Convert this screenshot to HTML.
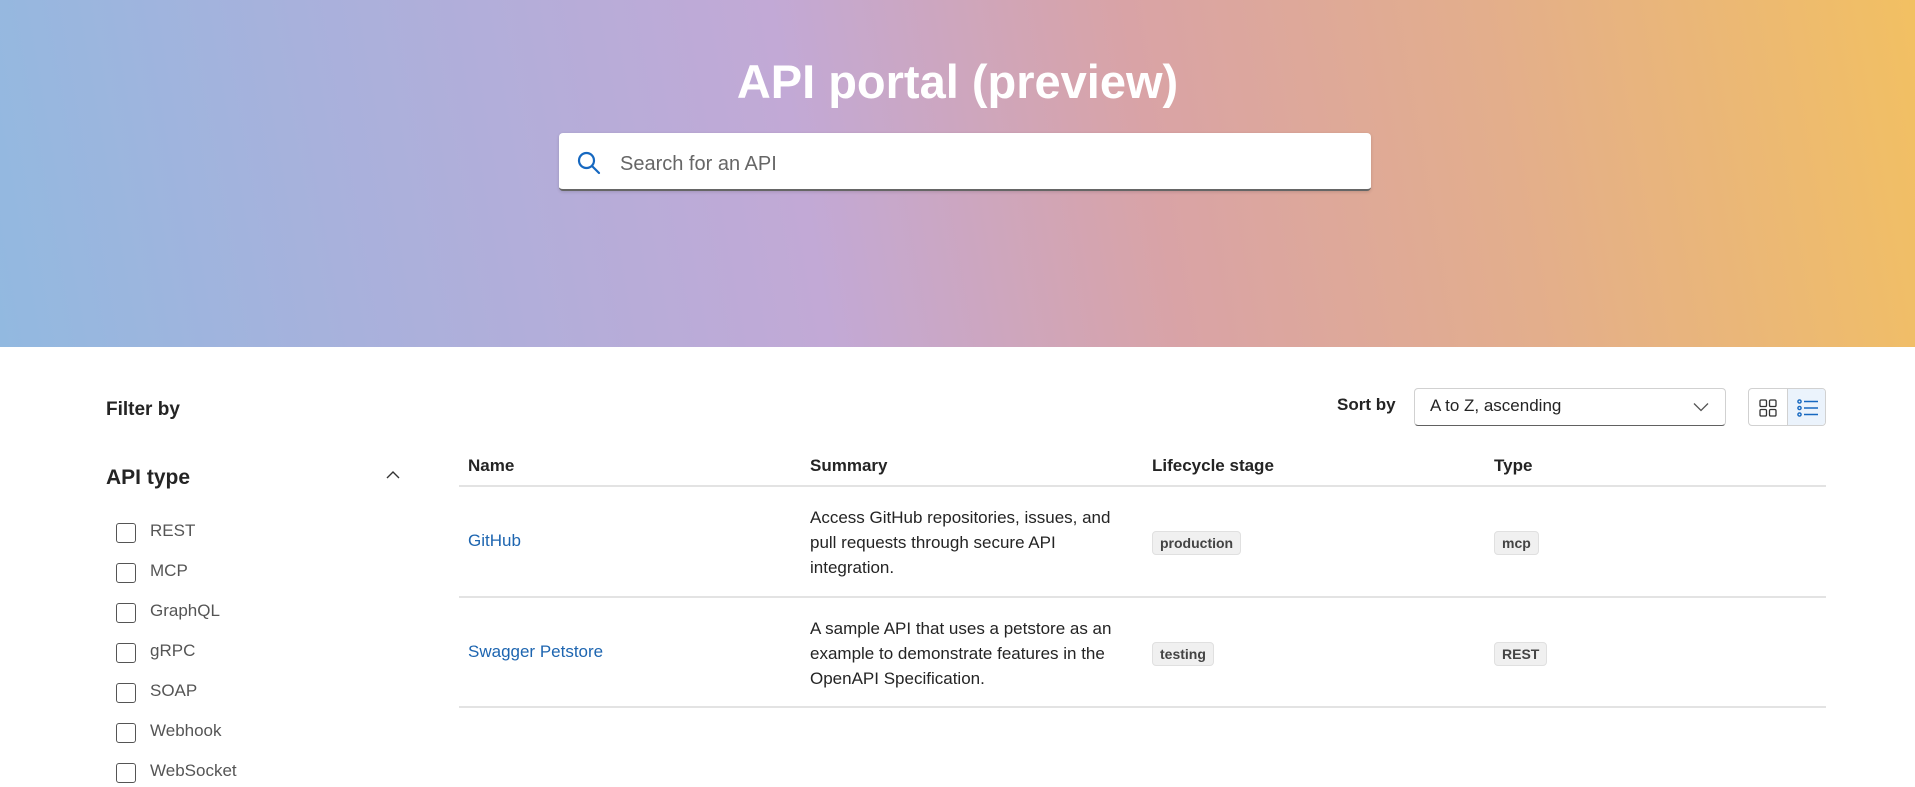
<!DOCTYPE html>
<html><head><meta charset="utf-8"><style>
*{box-sizing:border-box;margin:0;padding:0}
body{width:1915px;height:787px;overflow:hidden;background:#fff;font-family:"Segoe UI","Liberation Sans",sans-serif;color:#242424;position:relative}
.hero{position:absolute;left:0;top:0;width:1915px;height:347px;background:linear-gradient(80deg,#92b9e0 0%,#a8b1dc 18%,#c2a9d6 42%,#d9a3a6 60%,#e3ae8c 78%,#f2c062 100%)}
h1{position:absolute;left:0;width:1915px;top:54px;text-align:center;color:#fff;font-size:47px;font-weight:600}
.search{position:absolute;left:559px;top:133px;width:812px;height:58px;background:#fff;border-radius:4px;border-bottom:2px solid #666;box-shadow:0 1px 3px rgba(0,0,0,.15)}
.search .ph{position:absolute;left:61px;top:20px;font-size:20px;color:#666}
.abs{position:absolute;white-space:nowrap}
.cb{position:absolute;left:116px;width:20px;height:20px;border:1.5px solid #555;border-radius:3px}
.lbl{position:absolute;left:150px;font-size:17px;color:#555}
.th{position:absolute;top:456px;font-size:17px;font-weight:600}
.line{position:absolute;left:459px;width:1367px;height:2px;background:#e3e3e3}
.sum{position:absolute;left:810px;font-size:17px;line-height:25px;color:#242424}
.name{position:absolute;left:468px;font-size:17px;color:#1d65b0}
.badge{position:absolute;height:24px;padding:0 7px;font-size:14px;font-weight:600;line-height:22px;color:#444;background:#f0f0f0;border:1px solid #e0e0e0;border-radius:4px}
</style></head><body>
<div class="hero">
<h1>API portal (preview)</h1>
<div class="search">
<svg style="left:18px;top:18px;position:absolute" width="24" height="24" viewBox="0 0 24 24"><circle cx="9.5" cy="9.5" r="7.5" fill="none" stroke="#1668c0" stroke-width="2.2"/><path d="M15 15l7 7" stroke="#1668c0" stroke-width="2.2" stroke-linecap="round"/></svg>
<div class="ph">Search for an API</div>
</div>
</div>

<div class="abs" style="left:106px;top:399px;font-size:19px;font-weight:600">Filter by</div>
<div class="abs" style="left:106px;top:466px;font-size:21px;font-weight:600">API type</div>
<svg class="abs" style="left:385px;top:469px" width="16" height="12" viewBox="0 0 16 12"><path d="M2 9l6-6 6 6" fill="none" stroke="#333" stroke-width="1.4"/></svg>

<div class="cb" style="top:523px"></div><div class="lbl" style="top:521px">REST</div>
<div class="cb" style="top:563px"></div><div class="lbl" style="top:561px">MCP</div>
<div class="cb" style="top:603px"></div><div class="lbl" style="top:601px">GraphQL</div>
<div class="cb" style="top:643px"></div><div class="lbl" style="top:641px">gRPC</div>
<div class="cb" style="top:683px"></div><div class="lbl" style="top:681px">SOAP</div>
<div class="cb" style="top:723px"></div><div class="lbl" style="top:721px">Webhook</div>
<div class="cb" style="top:763px"></div><div class="lbl" style="top:761px">WebSocket</div>

<div class="abs" style="left:1337px;top:395px;font-size:17px;font-weight:600">Sort by</div>
<div class="abs" style="left:1414px;top:388px;width:312px;height:38px;border:1px solid #d1d1d1;border-bottom:1.5px solid #616161;border-radius:4px">
<div class="abs" style="left:15px;top:7px;font-size:17px">A to Z, ascending</div>
<svg class="abs" style="left:278px;top:13px" width="16" height="10" viewBox="0 0 16 10"><path d="M1 1.5l7 7 7-7" fill="none" stroke="#555" stroke-width="1.3"/></svg>
</div>
<div class="abs" style="left:1748px;top:388px;width:78px;height:38px;border:1px solid #d1d1d1;border-radius:4px;overflow:hidden">
<div class="abs" style="left:38px;top:0;width:40px;height:38px;background:#ebf3fc;border-left:1px solid #d1d1d1"></div>
<svg class="abs" style="left:10px;top:10px" width="18" height="18" viewBox="0 0 18 18" fill="none" stroke="#333" stroke-width="1.3"><rect x="1" y="1" width="6.5" height="6.5" rx="1.3"/><rect x="10.5" y="1" width="6.5" height="6.5" rx="1.3"/><rect x="1" y="10.5" width="6.5" height="6.5" rx="1.3"/><rect x="10.5" y="10.5" width="6.5" height="6.5" rx="1.3"/></svg>
<svg class="abs" style="left:48px;top:10px" width="22" height="18" viewBox="0 0 22 18" fill="none" stroke="#1668c0" stroke-width="1.4"><circle cx="2.5" cy="2.5" r="1.6"/><circle cx="2.5" cy="9" r="1.6"/><circle cx="2.5" cy="15.5" r="1.6"/><path d="M7 2.5h14M7 9h14M7 15.5h14"/></svg>
</div>

<div class="th" style="left:468px">Name</div>
<div class="th" style="left:810px">Summary</div>
<div class="th" style="left:1152px">Lifecycle stage</div>
<div class="th" style="left:1494px">Type</div>
<div class="line" style="top:485px"></div>

<div class="name" style="top:531px">GitHub</div>
<div class="sum" style="top:505px">Access GitHub repositories, issues, and<br>pull requests through secure API<br>integration.</div>
<div class="badge" style="left:1152px;top:531px">production</div>
<div class="badge" style="left:1494px;top:531px">mcp</div>
<div class="line" style="top:596px"></div>

<div class="name" style="top:642px">Swagger Petstore</div>
<div class="sum" style="top:616px">A sample API that uses a petstore as an<br>example to demonstrate features in the<br>OpenAPI Specification.</div>
<div class="badge" style="left:1152px;top:642px">testing</div>
<div class="badge" style="left:1494px;top:642px">REST</div>
<div class="line" style="top:706px"></div>
</body></html>
